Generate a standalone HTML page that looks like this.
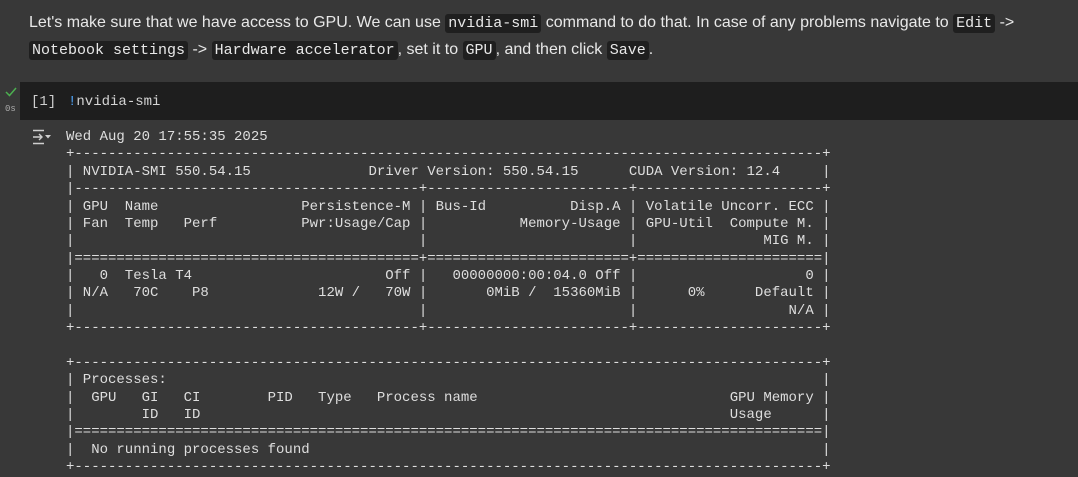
<!DOCTYPE html>
<html><head><style>
html,body{margin:0;padding:0;background:#383838;width:1078px;height:477px;overflow:hidden;}
body{position:relative;font-family:"Liberation Sans",sans-serif;color:#e3e3e3;}
.md{position:absolute;left:29px;top:10px;font-size:16px;line-height:26px;color:#e8e8e8;white-space:nowrap;}
.md code{font-family:"Liberation Mono",monospace;font-size:15px;background:#1f1f1f;padding:1px 3px;border-radius:3px;color:#e8e8e8;}
.cell{position:absolute;left:20px;top:82px;width:1058px;height:38px;background:#1e1e1e;}
.cnt{position:absolute;left:31px;top:94px;font-family:"Liberation Mono",monospace;font-size:14px;color:#cfcfcf;}
.cmd{position:absolute;left:68px;top:94px;font-family:"Liberation Mono",monospace;font-size:14px;color:#d4d4d4;}
.cmd b{color:#4fa3f7;font-weight:normal;}
.chk{position:absolute;left:4px;top:86px;}
.os{position:absolute;left:5px;top:104px;font-family:"Liberation Mono",monospace;font-size:9px;color:#aaa;}
pre{position:absolute;left:66px;top:129px;margin:0;font-family:"Liberation Mono",monospace;font-size:14px;line-height:17.37px;color:#dedede;}
.oi{position:absolute;left:31px;top:128px;}
</style></head><body>
<div class="md">Let's make sure that we have access to GPU. We can use <code>nvidia-smi</code> command to do that. In case of any problems navigate to <code>Edit</code> -&gt;<br><code>Notebook settings</code> -&gt; <code>Hardware accelerator</code>, set it to <code>GPU</code>, and then click <code>Save</code>.</div>
<div class="cell"></div>
<svg class="chk" width="14" height="12" viewBox="0 0 14 12"><path d="M2 6 L5.5 9.5 L12 2" fill="none" stroke="#4caf50" stroke-width="1.5"/></svg>
<div class="os">0s</div>
<div class="cnt">[1]</div>
<div class="cmd"><b>!</b>nvidia-smi</div>
<svg class="oi" width="22" height="18" viewBox="0 0 22 18"><path d="M2 2.5 H13 M2 15.5 H13 M2 9 H11 M8 6 L11 9 L8 12" fill="none" stroke="#cfcfcf" stroke-width="1.4"/><path d="M14 7 H20 L17 10.5 Z" fill="#cfcfcf"/></svg>
<pre>Wed Aug 20 17:55:35 2025       
+-----------------------------------------------------------------------------------------+
| NVIDIA-SMI 550.54.15              Driver Version: 550.54.15      CUDA Version: 12.4     |
|-----------------------------------------+------------------------+----------------------+
| GPU  Name                 Persistence-M | Bus-Id          Disp.A | Volatile Uncorr. ECC |
| Fan  Temp   Perf          Pwr:Usage/Cap |           Memory-Usage | GPU-Util  Compute M. |
|                                         |                        |               MIG M. |
|=========================================+========================+======================|
|   0  Tesla T4                       Off |   00000000:00:04.0 Off |                    0 |
| N/A   70C    P8             12W /   70W |       0MiB /  15360MiB |      0%      Default |
|                                         |                        |                  N/A |
+-----------------------------------------+------------------------+----------------------+
                                                                                         
+-----------------------------------------------------------------------------------------+
| Processes:                                                                              |
|  GPU   GI   CI        PID   Type   Process name                              GPU Memory |
|        ID   ID                                                               Usage      |
|=========================================================================================|
|  No running processes found                                                             |
+-----------------------------------------------------------------------------------------+</pre>
</body></html>
